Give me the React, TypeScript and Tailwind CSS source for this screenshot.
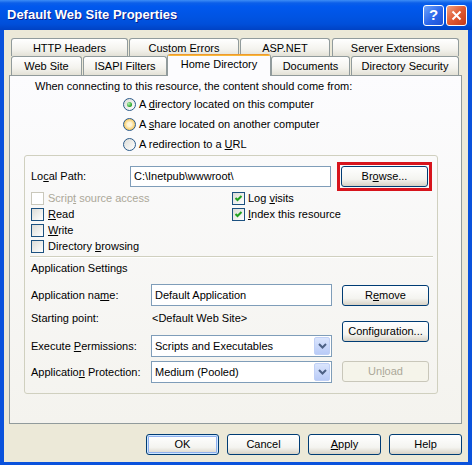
import type { ReactNode } from "react";

function U({ children }: { children: ReactNode }) {
  return <span className="underline decoration-1 underline-offset-[1px]">{children}</span>;
}

function Tab({ children, className = "" }: { children: ReactNode; className?: string }) {
  return (
    <div
      className={`flex items-center justify-center rounded-t-[3px] border border-b-0 border-[#919b9c] bg-[linear-gradient(#ffffff,#f4f3ee_60%,#e3e1d6)] ${className}`}
    >
      {children}
    </div>
  );
}

function Btn({
  children,
  className = "",
  def = false,
  disabled = false,
}: {
  children: ReactNode;
  className?: string;
  def?: boolean;
  disabled?: boolean;
}) {
  const look = disabled
    ? "border-[#c9c7ba] bg-[#f5f4ea] text-[#aca899]"
    : def
      ? "border-[#003c74] bg-[linear-gradient(#ffffff,#f4f4f0_65%,#d8d2c6)] shadow-[inset_0_0_0_1px_#cee7ff,inset_0_0_0_2px_#8fb0ee]"
      : "border-[#003c74] bg-[linear-gradient(#ffffff,#f4f4f0_65%,#d8d2c6)]";
  return (
    <div className={`flex h-[21px] shrink-0 items-center justify-center rounded-[3px] border ${look} ${className}`}>
      {children}
    </div>
  );
}

function Check({ checked = false, disabled = false }: { checked?: boolean; disabled?: boolean }) {
  return (
    <span
      className={`flex h-[13px] w-[13px] shrink-0 items-center justify-center border ${
        disabled
          ? "border-[#cac8bb] bg-white"
          : "border-[#1c5180] bg-[linear-gradient(135deg,#dcdcd7,#ffffff)]"
      }`}
    >
      {checked && (
        <svg width="11" height="11" viewBox="0 0 11 11">
          <path d="M2.5 5 L4.5 7 L8.5 3" fill="none" stroke="#21a121" strokeWidth="2" />
        </svg>
      )}
    </span>
  );
}

function Radio({ checked = false, hover = false }: { checked?: boolean; hover?: boolean }) {
  return (
    <span
      className={`flex h-[13px] w-[13px] shrink-0 items-center justify-center rounded-full border border-[#2a5a8a] ${
        hover
          ? "bg-[radial-gradient(circle,#fff6d8_25%,#f6c75a_75%)]"
          : "bg-[linear-gradient(135deg,#dcdcd7,#ffffff)]"
      }`}
    >
      {checked && (
        <span className="h-[5px] w-[5px] rounded-full bg-[radial-gradient(circle_at_35%_35%,#b6f3b6,#21a121_70%)]" />
      )}
    </span>
  );
}

function Select({ value }: { value: string }) {
  return (
    <div className="flex h-[22px] w-[181px] items-center border border-[#7f9db9] bg-white pl-[3px] pr-[1px]">
      <span className="flex-1">{value}</span>
      <span className="flex h-[18px] w-[16px] items-center justify-center rounded-[2px] border border-[#c0d0f6] bg-[linear-gradient(#dae5fd,#b9cbf7)]">
        <svg width="9" height="6" viewBox="0 0 9 6">
          <path d="M1 1 L4.5 4.5 L8 1" fill="none" stroke="#4d6185" strokeWidth="2" />
        </svg>
      </span>
    </div>
  );
}

export default function App() {
  return (
    <div className="flex h-[465px] w-[472px] flex-col font-['Liberation_Sans',Arial,sans-serif] text-[11px] text-black">
      {/* title bar */}
      <div className="flex h-[30px] shrink-0 items-center bg-[linear-gradient(180deg,#3d8df6_0%,#0b5fe9_10%,#0058ee_22%,#0054e3_55%,#004fda_80%,#0042c4_100%)] pl-[7px] pr-[5px]">
        <span className="flex-1 text-[13px] font-bold text-white [text-shadow:1px_1px_0_#0a1d8a]">
          Default Web Site Properties
        </span>
        <div className="flex gap-[2px]">
          <div className="flex h-[21px] w-[21px] items-center justify-center rounded-[3px] border border-white bg-[linear-gradient(135deg,#6fa3fa,#2b66ea_55%,#1e52d6)] text-[15px] font-bold text-white">
            ?
          </div>
          <div className="flex h-[21px] w-[21px] items-center justify-center rounded-[3px] border border-white bg-[linear-gradient(135deg,#f0a080,#e05a32_50%,#c63a18)]">
            <svg width="11" height="11" viewBox="0 0 11 11">
              <path d="M1.5 1.5 L9.5 9.5 M9.5 1.5 L1.5 9.5" stroke="white" strokeWidth="2" />
            </svg>
          </div>
        </div>
      </div>

      {/* body */}
      <div className="flex flex-1 flex-col border-x-4 border-b-[3px] border-[#0a52dc] bg-[#ece9d8] pt-[8px]">
        {/* back row of tabs */}
        <div className="flex h-[18px] pl-[7px]">
          <Tab className="h-[18px] w-[117px] pt-[1px]">HTTP Headers</Tab>
          <Tab className="ml-[1px] h-[18px] w-[110px] pt-[1px]">Custom Errors</Tab>
          <Tab className="ml-[1px] h-[18px] w-[90px] pt-[1px]">ASP.NET</Tab>
          <Tab className="ml-[2px] h-[18px] w-[127px] pt-[1px]">Server Extensions</Tab>
        </div>
        {/* front row of tabs */}
        <div className="flex h-[19px] items-end pl-[7px]">
          <Tab className="h-[19px] w-[71px]">Web Site</Tab>
          <Tab className="ml-[1px] h-[19px] w-[84px]">ISAPI Filters</Tab>
          <div className="relative z-10 -mb-px flex h-[22px] w-[104px] flex-col overflow-hidden rounded-t-[3px] border-x border-[#919b9c] bg-[#fcfcfe]">
            <div className="h-[3px] bg-[linear-gradient(#e68b2c,#ffc73c)]" />
            <div className="flex flex-1 items-center justify-center pb-[4px]">Home Directory</div>
          </div>
          <Tab className="h-[19px] w-[79px]">Documents</Tab>
          <Tab className="ml-[1px] h-[19px] w-[108px]">Directory Security</Tab>
        </div>

        {/* tab page */}
        <div className="ml-[5px] flex h-[349px] w-[453px] flex-col border border-[#919b9c] bg-[linear-gradient(#fcfcfe,#f4f3ee)] pt-[2px]">
          <div className="flex h-[16px] items-center pl-[25px]">
            When connecting to this resource, the content should come from:
          </div>
          <div className="flex h-[20px] items-center gap-[3px] pl-[113px]">
            <Radio checked />
            <span>
              A <U>d</U>irectory located on this computer
            </span>
          </div>
          <div className="flex h-[20px] items-center gap-[3px] pl-[113px]">
            <Radio hover />
            <span>
              A <U>s</U>hare located on another computer
            </span>
          </div>
          <div className="flex h-[20px] items-center gap-[3px] pl-[113px]">
            <Radio />
            <span>
              A redirection to a <U>U</U>RL
            </span>
          </div>

          {/* group box */}
          <div className="ml-[14px] mt-[1px] flex h-[239px] w-[414px] flex-col rounded-[3px] border border-[#d0d0bf]">
            <div className="mt-[6px] flex h-[29px] items-center pl-[6px]">
              <span className="w-[99px]">
                Lo<U>c</U>al Path:
              </span>
              <div className="flex h-[21px] w-[201px] items-center border border-[#7f9db9] bg-white pl-[3px]">
                {"C:\\Inetpub\\wwwroot\\"}
              </div>
              <div className="ml-[6px] border-[3px] border-[#d7141c] p-[1px]">
                <Btn className="w-[87px]">
                  Br<U>o</U>wse...
                </Btn>
              </div>
            </div>

            <div className="-mt-px flex pl-[6px]">
              <div className="flex w-[201px] flex-col">
                <div className="flex h-[16px] items-center gap-[4px] text-[#aca899]">
                  <Check disabled />
                  <span>
                    Scrip<U>t</U> source access
                  </span>
                </div>
                <div className="flex h-[16px] items-center gap-[4px]">
                  <Check />
                  <span>
                    <U>R</U>ead
                  </span>
                </div>
                <div className="flex h-[16px] items-center gap-[4px]">
                  <Check />
                  <span>
                    <U>W</U>rite
                  </span>
                </div>
                <div className="flex h-[16px] items-center gap-[4px]">
                  <Check />
                  <span>
                    Directory <U>b</U>rowsing
                  </span>
                </div>
              </div>
              <div className="flex flex-col">
                <div className="flex h-[16px] items-center gap-[3px]">
                  <Check checked />
                  <span>
                    Log <U>v</U>isits
                  </span>
                </div>
                <div className="flex h-[16px] items-center gap-[3px]">
                  <Check checked />
                  <span>
                    <U>I</U>ndex this resource
                  </span>
                </div>
              </div>
            </div>

            <div className="ml-[5px] mt-[2px] h-[2px] w-[403px] border-t border-b border-t-[#d0d0bf] border-b-white" />

            <div className="mt-[2px] flex h-[16px] items-center pl-[6px]">Application Settings</div>

            <div className="mt-[8px] flex pl-[6px]">
              <div className="flex flex-col">
                <div className="flex h-[22px] items-center">
                  <span className="w-[120px]">
                    Application na<U>m</U>e:
                  </span>
                  <div className="flex h-[22px] w-[181px] items-center border border-[#7f9db9] bg-white pl-[3px]">
                    Default Application
                  </div>
                </div>
                <div className="mt-[3px] flex h-[18px] items-center">
                  <span className="w-[121px]">Starting point:</span>
                  <span>&lt;Default Web Site&gt;</span>
                </div>
                <div className="mt-[8px] flex h-[22px] items-center">
                  <span className="w-[120px]">
                    Execute <U>P</U>ermissions:
                  </span>
                  <Select value="Scripts and Executables" />
                </div>
                <div className="mt-[4px] flex h-[22px] items-center">
                  <span className="w-[120px]">
                    Applicatio<U>n</U> Protection:
                  </span>
                  <Select value="Medium (Pooled)" />
                </div>
              </div>
              <div className="ml-[10px] flex flex-col">
                <Btn className="mt-[1px] w-[87px]">
                  R<U>e</U>move
                </Btn>
                <Btn className="mt-[15px] w-[87px]">Configuration...</Btn>
                <Btn disabled className="mt-[19px] w-[87px]">
                  Un<U>l</U>oad
                </Btn>
              </div>
            </div>
          </div>
        </div>

        {/* dialog buttons */}
        <div className="ml-[5px] mt-[10px] flex w-[453px] justify-end gap-[8px]">
          <Btn def className="w-[73px]">
            OK
          </Btn>
          <Btn className="w-[73px]">Cancel</Btn>
          <Btn className="w-[73px]">
            <U>A</U>pply
          </Btn>
          <Btn className="w-[73px]">Help</Btn>
        </div>
      </div>
    </div>
  );
}
